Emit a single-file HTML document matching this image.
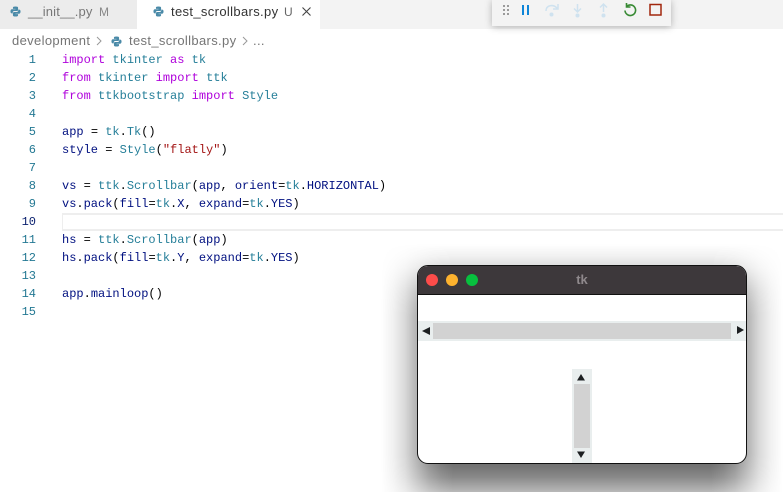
<!DOCTYPE html>
<html><head><meta charset="utf-8">
<style>
html,body{margin:0;padding:0;background:#fff;overflow:hidden;width:783px;height:492px}
#r{position:relative;width:783px;height:492px;overflow:hidden;background:#fff;font-family:"Liberation Sans",sans-serif}
.a{position:absolute}
.l{position:absolute;left:62px;height:18px;font:12px/18px "Liberation Mono",monospace;color:#001080;white-space:pre}
.n{position:absolute;left:0;width:36px;text-align:right;font:12px/18px "Liberation Mono",monospace;color:#237893}
.k{color:#af00db}.t{color:#267f99}.f{color:#001080}.s{color:#a31515}.w{color:#000}.d{color:#795e26}
.ui{font-size:13px;letter-spacing:.35px;white-space:pre;position:absolute}
#sx{left:381px;top:244px;width:402px;height:248px;
-webkit-mask-image:linear-gradient(to right,rgba(0,0,0,0) 0,rgba(0,0,0,.09) 12px,rgba(0,0,0,.25) 24px,rgba(0,0,0,.5) 36px,rgba(0,0,0,.75) 48px,rgba(0,0,0,.91) 60px,#000 72px,#000 330px,rgba(0,0,0,.91) 342px,rgba(0,0,0,.75) 354px,rgba(0,0,0,.5) 366px,rgba(0,0,0,.25) 378px,rgba(0,0,0,.09) 390px,rgba(0,0,0,0) 402px);
mask-image:linear-gradient(to right,rgba(0,0,0,0) 0,rgba(0,0,0,.09) 12px,rgba(0,0,0,.25) 24px,rgba(0,0,0,.5) 36px,rgba(0,0,0,.75) 48px,rgba(0,0,0,.91) 60px,#000 72px,#000 330px,rgba(0,0,0,.91) 342px,rgba(0,0,0,.75) 354px,rgba(0,0,0,.5) 366px,rgba(0,0,0,.25) 378px,rgba(0,0,0,.09) 390px,rgba(0,0,0,0) 402px)}
#sy{left:0;top:0;width:402px;height:248px;background-repeat:no-repeat;background-size:402px 282px;
background-image:linear-gradient(to bottom,rgba(0,0,0,0) 0,rgba(0,0,0,.054) 12px,rgba(0,0,0,.15) 24px,rgba(0,0,0,.3) 36px,rgba(0,0,0,.45) 48px,rgba(0,0,0,.546) 60px,rgba(0,0,0,.6) 72px,rgba(0,0,0,.6) 210px,rgba(0,0,0,.546) 222px,rgba(0,0,0,.45) 234px,rgba(0,0,0,.3) 246px,rgba(0,0,0,.15) 258px,rgba(0,0,0,.054) 270px,rgba(0,0,0,0) 282px)}
</style></head><body><div id="r">
<div class="a" style="left:0;top:0;width:783px;height:29px;background:#f3f3f3"></div>
<div class="a" style="left:0;top:0;width:137px;height:29px;background:#ececec"></div>
<div class="a" style="left:137px;top:0;width:183px;height:29px;background:#fff"></div>

<svg class="a" style="left:10px;top:6px" width="11" height="11" viewBox="0 0 12 12"><g fill="#4a8aa8"><path d="M3.200 1.800C3.200.9 4 .5 6 .5s2.800.4 2.800 1.300v2.400c0 .8-.6 1.300-1.300 1.300H4.600c-.9 0-1.600.7-1.600 1.600v1H2C1 8.100.5 7.300.5 6S1 3.600 2 3.600h4v-.5H3.200z"/><path transform="rotate(180 6 6)" d="M3.200 1.800C3.200.9 4 .5 6 .5s2.800.4 2.800 1.300v2.400c0 .8-.6 1.300-1.300 1.300H4.600c-.9 0-1.600.7-1.600 1.600v1H2C1 8.100.5 7.300.5 6S1 3.600 2 3.600h4v-.5H3.200z"/></g></svg>
<div class="ui" style="left:28px;top:4px;color:#777;letter-spacing:.15px">__init__.py</div>
<div class="ui" style="left:99px;top:5px;color:#888;font-size:12px">M</div>

<svg class="a" style="left:153px;top:6px" width="11" height="11" viewBox="0 0 12 12"><g fill="#4a8aa8"><path d="M3.200 1.800C3.200.9 4 .5 6 .5s2.800.4 2.800 1.300v2.400c0 .8-.6 1.300-1.300 1.300H4.600c-.9 0-1.600.7-1.600 1.600v1H2C1 8.100.5 7.300.5 6S1 3.600 2 3.600h4v-.5H3.200z"/><path transform="rotate(180 6 6)" d="M3.200 1.800C3.200.9 4 .5 6 .5s2.800.4 2.800 1.300v2.400c0 .8-.6 1.300-1.300 1.300H4.600c-.9 0-1.600.7-1.600 1.600v1H2C1 8.100.5 7.300.5 6S1 3.600 2 3.600h4v-.5H3.200z"/></g></svg>
<div class="ui" style="left:171px;top:4px;color:#333">test_scrollbars.py</div>
<div class="ui" style="left:284px;top:5px;color:#666;font-size:12px">U</div>
<svg class="a" style="left:301px;top:6px" width="11" height="11" viewBox="0 0 11 11"><path d="M1.500 1.500l8 8M9.500 1.500l-8 8" stroke="#444" stroke-width="1.100" fill="none"/></svg>

<div class="ui" style="left:12px;top:33px;color:#757575">development</div>
<svg class="a" style="left:95px;top:36px" width="8" height="10" viewBox="0 0 8 10"><path d="M2 1l4 4-4 4" stroke="#999" fill="none"/></svg>
<svg class="a" style="left:111px;top:35.500px" width="11" height="11" viewBox="0 0 12 12"><g fill="#4a8aa8"><path d="M3.200 1.800C3.200.9 4 .5 6 .5s2.800.4 2.800 1.300v2.400c0 .8-.6 1.300-1.300 1.300H4.600c-.9 0-1.600.7-1.600 1.600v1H2C1 8.100.5 7.300.5 6S1 3.600 2 3.600h4v-.5H3.200z"/><path transform="rotate(180 6 6)" d="M3.200 1.800C3.200.9 4 .5 6 .5s2.800.4 2.800 1.300v2.400c0 .8-.6 1.300-1.300 1.300H4.600c-.9 0-1.600.7-1.600 1.600v1H2C1 8.100.5 7.300.5 6S1 3.600 2 3.600h4v-.5H3.200z"/></g></svg>
<div class="ui" style="left:129px;top:33px;color:#757575">test_scrollbars.py</div>
<svg class="a" style="left:241px;top:36px" width="8" height="10" viewBox="0 0 8 10"><path d="M2 1l4 4-4 4" stroke="#999" fill="none"/></svg>
<div class="ui" style="left:253px;top:33px;color:#757575">...</div>

<div class="a" style="left:492px;top:0;width:179px;height:26px;background:#f3f3f3;box-shadow:0 1px 7px rgba(0,0,0,.28)"></div>
<svg class="a" style="left:492px;top:0" width="179" height="25" viewBox="0 0 179 25">
<g fill="#9a9a9a"><rect x="11" y="5" width="2" height="2"/><rect x="15" y="5" width="2" height="2"/><rect x="11" y="9" width="2" height="2"/><rect x="15" y="9" width="2" height="2"/><rect x="11" y="13" width="2" height="2"/><rect x="15" y="13" width="2" height="2"/></g>
<path d="M30 5h2v10h-2zM35 5h2v10h-2z" fill="#0e85d8"/>
<g stroke="#cfe2ef" stroke-width="1.500" fill="none"><path d="M54 11c0-6 7-7 11-3M66 4v5h-5"/><path d="M85.500 4v8M82 8.500l3.500 3.500 3.500-3.500"/><path d="M111.500 12V4M108 7.500l3.500-3.500 3.500 3.500"/></g>
<g fill="#cfe2ef"><circle cx="59.500" cy="14.500" r="2"/><circle cx="85.500" cy="15.500" r="2"/><circle cx="111.500" cy="15.500" r="2"/></g>
<path d="M134.500 6.500a5.300 5.300 0 1 1-1.500 4M134.500 3v4h4" stroke="#388a34" stroke-width="1.600" fill="none"/>
<rect x="158" y="4.500" width="11" height="10.500" fill="none" stroke="#a1260d" stroke-width="1.500"/>
</svg>

<div class="a" style="left:62px;top:213px;width:721px;height:18px;box-sizing:border-box;border:solid #eee;border-width:2px 0 2px 1px"></div>

<div class="n" style="top:51px">1</div><div class="l" style="top:51px"><span class="k">import</span> <span class="t">tkinter</span> <span class="k">as</span> <span class="t">tk</span></div>
<div class="n" style="top:69px">2</div><div class="l" style="top:69px"><span class="k">from</span> <span class="t">tkinter</span> <span class="k">import</span> <span class="t">ttk</span></div>
<div class="n" style="top:87px">3</div><div class="l" style="top:87px"><span class="k">from</span> <span class="t">ttkbootstrap</span> <span class="k">import</span> <span class="t">Style</span></div>
<div class="n" style="top:105px">4</div>
<div class="n" style="top:123px">5</div><div class="l" style="top:123px">app <span class="w">=</span> <span class="t">tk</span><span class="w">.</span><span class="t">Tk</span><span class="w">()</span></div>
<div class="n" style="top:141px">6</div><div class="l" style="top:141px">style <span class="w">=</span> <span class="t">Style</span><span class="w">(</span><span class="s">"flatly"</span><span class="w">)</span></div>
<div class="n" style="top:159px">7</div>
<div class="n" style="top:177px">8</div><div class="l" style="top:177px">vs <span class="w">=</span> <span class="t">ttk</span><span class="w">.</span><span class="t">Scrollbar</span><span class="w">(</span>app<span class="w">,</span> orient<span class="w">=</span><span class="t">tk</span><span class="w">.</span>HORIZONTAL<span class="w">)</span></div>
<div class="n" style="top:195px">9</div><div class="l" style="top:195px">vs<span class="w">.</span>pack<span class="w">(</span>fill<span class="w">=</span><span class="t">tk</span><span class="w">.</span>X<span class="w">,</span> expand<span class="w">=</span><span class="t">tk</span><span class="w">.</span>YES<span class="w">)</span></div>
<div class="n" style="top:213px;color:#0b216f">10</div>
<div class="n" style="top:231px">11</div><div class="l" style="top:231px">hs <span class="w">=</span> <span class="t">ttk</span><span class="w">.</span><span class="t">Scrollbar</span><span class="w">(</span>app<span class="w">)</span></div>
<div class="n" style="top:249px">12</div><div class="l" style="top:249px">hs<span class="w">.</span>pack<span class="w">(</span>fill<span class="w">=</span><span class="t">tk</span><span class="w">.</span>Y<span class="w">,</span> expand<span class="w">=</span><span class="t">tk</span><span class="w">.</span>YES<span class="w">)</span></div>
<div class="n" style="top:267px">13</div>
<div class="n" style="top:285px">14</div><div class="l" style="top:285px">app<span class="w">.</span>mainloop<span class="w">()</span></div>
<div class="n" style="top:303px">15</div>

<div class="a" id="sx"><div class="a" id="sy"></div></div>
<div class="a" style="left:417px;top:265px;width:330px;height:199px;box-sizing:border-box;border-radius:11px;background:#fff;border:1px solid #111;overflow:hidden">
 <div class="a" style="left:0;top:0;width:328px;height:28px;background:#3d383b;border-bottom:1px solid #111"></div>
 <div class="a" style="left:8px;top:8px;width:12px;height:12px;border-radius:50%;background:#fc4c4a"></div>
 <div class="a" style="left:28px;top:8px;width:12px;height:12px;border-radius:50%;background:#fdb22e"></div>
 <div class="a" style="left:48px;top:8px;width:12px;height:12px;border-radius:50%;background:#07c03e"></div>
 <div class="a" style="left:0;top:7px;width:328px;text-align:center;font:bold 13px/14px 'Liberation Sans',sans-serif;color:#8f898c">tk</div>
 <div class="a" style="left:0;top:55px;width:328px;height:20px;background:#e9eeee"></div>
 <div class="a" style="left:15px;top:57px;width:298px;height:16px;background:#d2d2d2"></div>
 <svg class="a" style="left:3px;top:61px" width="10" height="9"><path d="M1 4l8-4v8z" fill="#1c1f21"/></svg>
 <svg class="a" style="left:318px;top:60px" width="9" height="9"><path d="M8 4L1 0v8z" fill="#1c1f21"/></svg>
 <div class="a" style="left:154px;top:103px;width:20px;height:94px;background:#e9eeee"></div>
 <div class="a" style="left:156px;top:118px;width:16px;height:64px;background:#d2d2d2"></div>
 <svg class="a" style="left:159px;top:107px" width="8" height="8"><path d="M4 1l4 6.500H0z" fill="#1c1f21"/></svg>
 <svg class="a" style="left:159px;top:185px" width="8" height="8"><path d="M4 7L8 .5H0z" fill="#1c1f21"/></svg>
</div>
</div></body></html>
